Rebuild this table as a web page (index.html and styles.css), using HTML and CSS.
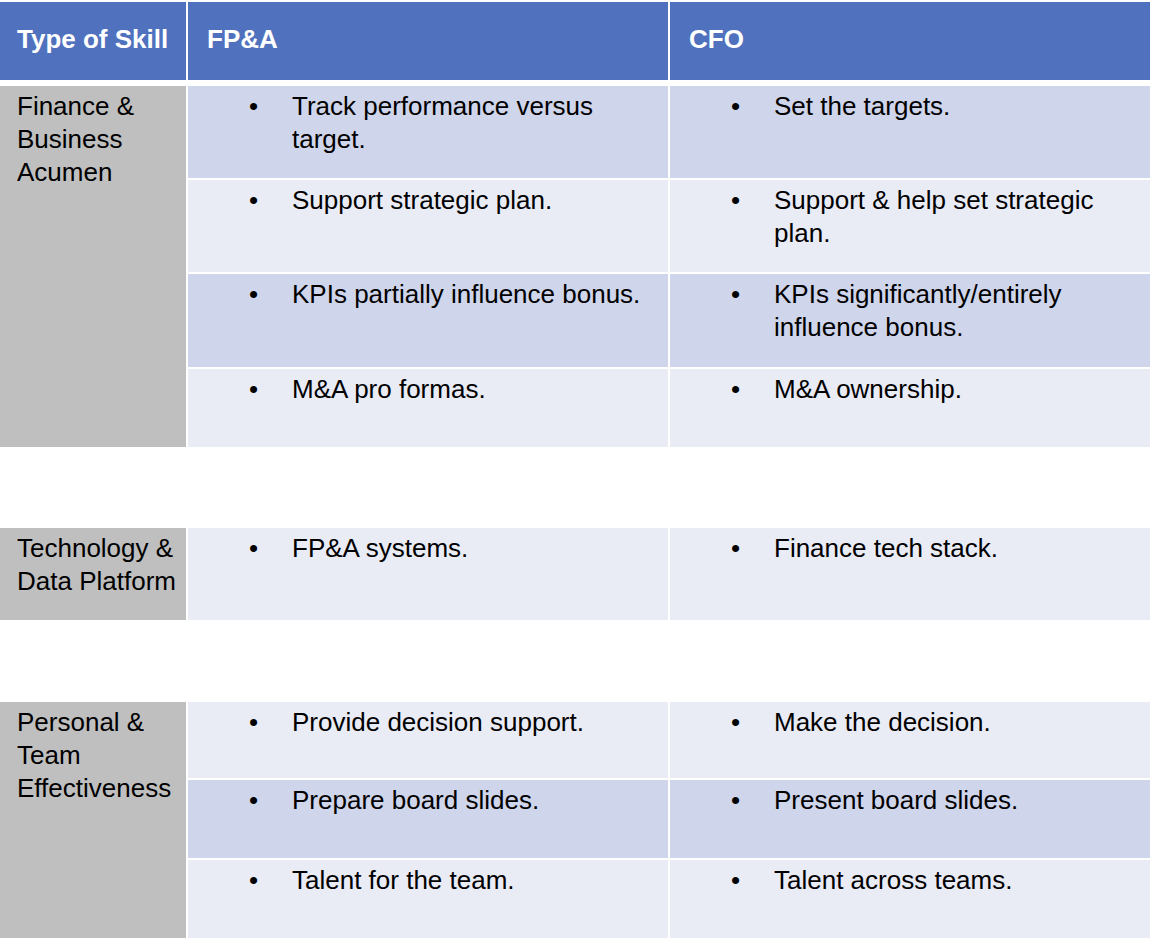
FILE: index.html
```html
<!DOCTYPE html>
<html lang="en">
<head>
<meta charset="utf-8">
<title>Skills: FP&amp;A vs CFO</title>
<link rel="stylesheet" href="styles.css">
</head>
<body>
<main class="sheet">
  <div class="head">
    <div class="hcell hcell-first">Type of Skill</div>
    <div class="hcell">FP&amp;A</div>
    <div class="hcell">CFO</div>
  </div>

  <section class="group group-finance">
    <div class="skill">Finance &amp; Business Acumen</div>
    <div class="cell dark"><div class="item"><span class="bullet">•</span><span class="txt">Track performance versus target.</span></div></div>
    <div class="cell dark"><div class="item"><span class="bullet">•</span><span class="txt">Set the targets.</span></div></div>
    <div class="cell light"><div class="item"><span class="bullet">•</span><span class="txt">Support strategic plan.</span></div></div>
    <div class="cell light"><div class="item"><span class="bullet">•</span><span class="txt">Support &amp; help set strategic plan.</span></div></div>
    <div class="cell dark"><div class="item"><span class="bullet">•</span><span class="txt">KPIs partially influence bonus.</span></div></div>
    <div class="cell dark"><div class="item"><span class="bullet">•</span><span class="txt">KPIs significantly/entirely influence bonus.</span></div></div>
    <div class="cell light"><div class="item"><span class="bullet">•</span><span class="txt">M&amp;A pro formas.</span></div></div>
    <div class="cell light"><div class="item"><span class="bullet">•</span><span class="txt">M&amp;A ownership.</span></div></div>
  </section>

  <section class="group group-tech">
    <div class="skill">Technology &amp; Data Platform</div>
    <div class="cell light"><div class="item"><span class="bullet">•</span><span class="txt">FP&amp;A systems.</span></div></div>
    <div class="cell light"><div class="item"><span class="bullet">•</span><span class="txt">Finance tech stack.</span></div></div>
  </section>

  <section class="group group-personal">
    <div class="skill">Personal &amp; Team Effectiveness</div>
    <div class="cell light"><div class="item"><span class="bullet">•</span><span class="txt">Provide decision support.</span></div></div>
    <div class="cell light"><div class="item"><span class="bullet">•</span><span class="txt">Make the decision.</span></div></div>
    <div class="cell dark"><div class="item"><span class="bullet">•</span><span class="txt">Prepare board slides.</span></div></div>
    <div class="cell dark"><div class="item"><span class="bullet">•</span><span class="txt">Present board slides.</span></div></div>
    <div class="cell light"><div class="item"><span class="bullet">•</span><span class="txt">Talent for the team.</span></div></div>
    <div class="cell light"><div class="item"><span class="bullet">•</span><span class="txt">Talent across teams.</span></div></div>
  </section>
</main>
</body>
</html>
```
FILE: styles.css
```css
html, body {
  margin: 0;
  padding: 0;
  background: #ffffff;
}

body {
  font-family: "Liberation Sans", Arial, Helvetica, sans-serif;
  font-size: 26px;
  line-height: 33px;
  color: #000000;
}

.sheet {
  width: 1150px;
  padding-top: 2px;
  display: flex;
  flex-direction: column;
}

.head {
  display: grid;
  grid-template-columns: 186px 480px 480px;
  column-gap: 2px;
  height: 78px;
}

.hcell {
  background: #4f71be;
  color: #ffffff;
  font-weight: bold;
  padding: 21px 17px 0 19px;
}

.hcell-first {
  padding-left: 17px;
}

.group {
  display: grid;
  grid-template-columns: 186px 480px 480px;
  column-gap: 2px;
  row-gap: 2px;
}

.group-finance {
  margin-top: 6px;
  grid-template-rows: 92px 92px 93px 78px;
}

.group-tech {
  margin-top: 81px;
  grid-template-rows: 92px;
}

.group-personal {
  margin-top: 82px;
  grid-template-rows: 76px 78px 78px;
}

.skill {
  grid-column: 1;
  grid-row: 1 / -1;
  background: #bfbfbf;
  padding: 4px 6px 0 17px;
}

.cell {
  padding: 4px 12px 0 61px;
}

.dark {
  background: #cfd5ea;
}

.light {
  background: #e9ebf5;
}

.item {
  display: flex;
}

.bullet {
  flex: none;
  width: 43px;
}

.txt {
  flex: 1;
}
```
